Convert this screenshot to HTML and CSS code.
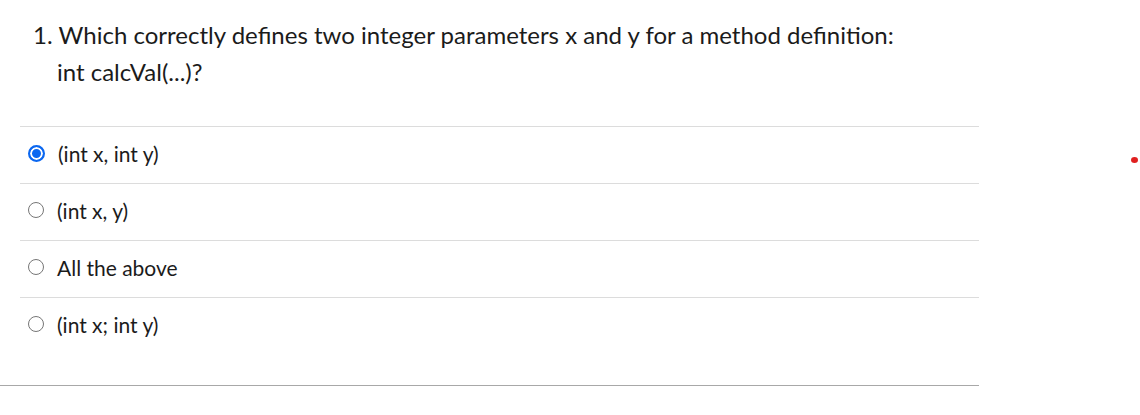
FILE: index.html
```html
<!DOCTYPE html>
<html>
<head>
<meta charset="utf-8">
<link rel="stylesheet" href="styles.css">
</head>
<body>
<div class="page">
  <div class="quiz">
    <div class="question"><span class="num">1.</span>Which correctly defines two integer parameters x and y for a method definition: int calcVal(...)?</div>
    <div class="answers">
      <label class="answer"><span class="radio checked"></span><span class="text">(int x, int y)</span></label>
      <label class="answer"><span class="radio"></span><span class="text">(int x, y)</span></label>
      <label class="answer"><span class="radio"></span><span class="text">All the above</span></label>
      <label class="answer"><span class="radio"></span><span class="text">(int x; int y)</span></label>
    </div>
  </div>
  <div class="marker"></div>
</div>
<div class="footer-line"></div>
</body>
</html>
```
FILE: styles.css
```css
html, body {
  margin: 0;
  padding: 0;
  background: #fff;
}
body {
  font-family: Lato, "Noto Sans", sans-serif;
  color: #1b1b1b;
}
.page {
  display: flex;
  height: 385px;
}
.quiz {
  width: 959px;
  margin-left: 20px;
  padding-top: 16px;
}
.question {
  font-size: 24px;
  line-height: 37px;
  padding-left: 37px;
  text-indent: -24px;
  padding-right: 69px;
  margin-bottom: 36px;
}
.num {
  margin-right: 6px;
}
.answers {
  display: flex;
  flex-direction: column;
}
.answer {
  display: flex;
  align-items: center;
  gap: 13px;
  height: 57px;
  border-top: 1px solid #dcdcdc;
  box-sizing: border-box;
  padding-left: 8px;
  padding-bottom: 4px;
  font-size: 21px;
}
.radio {
  width: 14px;
  height: 14px;
  border: 1.5px solid #767676;
  border-radius: 50%;
  box-sizing: content-box;
}
.radio.checked {
  border: 2px solid #0b67f0;
  width: 13px;
  height: 13px;
  background: #0b67f0;
  box-shadow: inset 0 0 0 2px #fff;
}
.marker {
  width: 7px;
  height: 6px;
  border-radius: 50%;
  background: #e02020;
  margin-left: 152px;
  margin-top: 157px;
}
.footer-line {
  width: 979px;
  height: 1px;
  background: #a8a8a8;
}
```
